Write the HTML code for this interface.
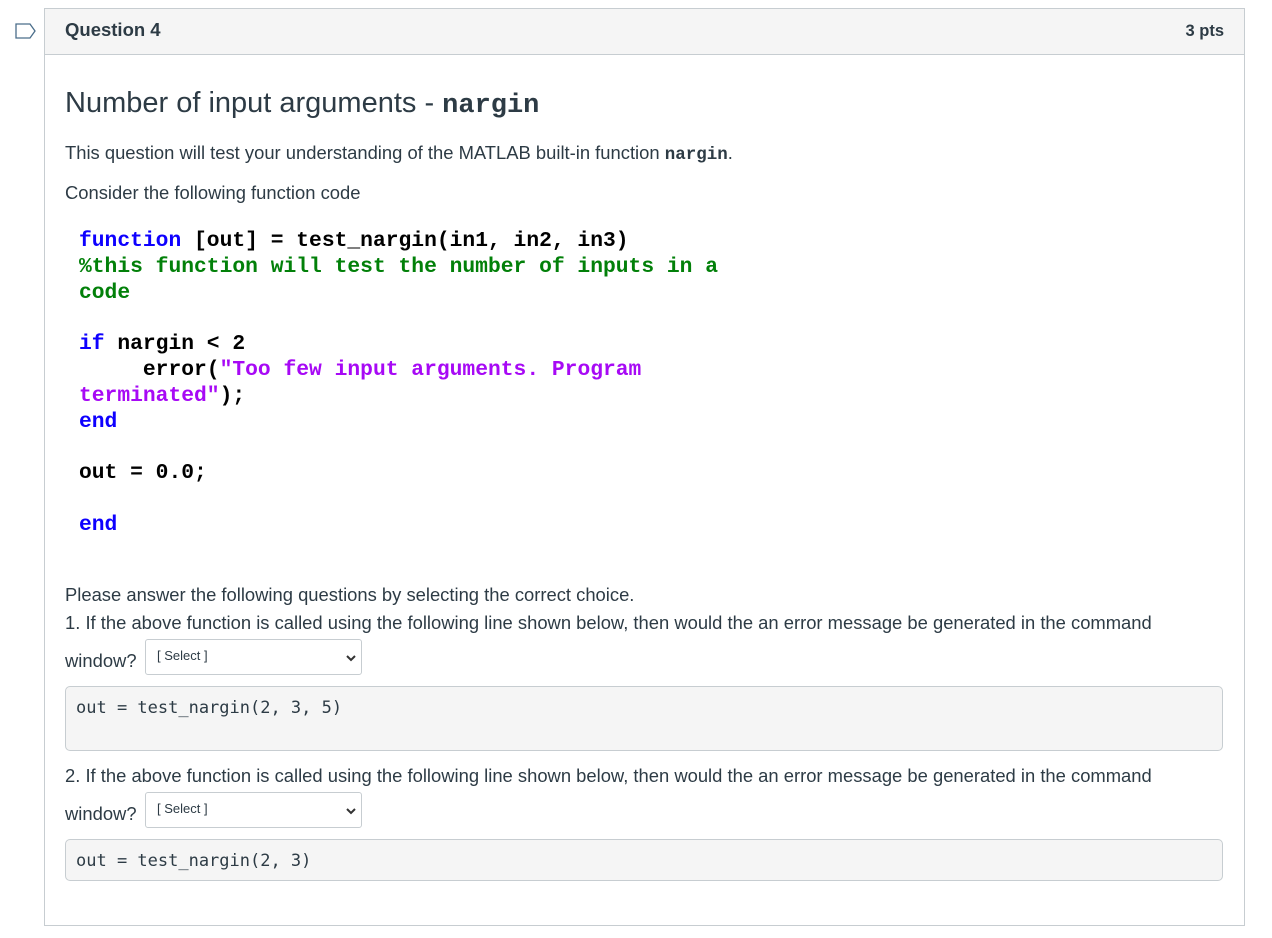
<!DOCTYPE html>
<html><head><style>
body{margin:0;background:#fff;width:1272px;height:938px;position:relative;font-family:"Liberation Sans",sans-serif;color:#2d3b45;}
.flag{position:absolute;left:15px;top:23px}
.box{position:absolute;left:44px;top:8px;width:1199px;height:916px;border:1px solid #c7cdd1;}
.hdr{height:45px;background:#f5f5f5;border-bottom:1px solid #c7cdd1;position:relative}
.hdr .t{position:absolute;left:20px;top:10px;font-weight:bold;font-size:18.5px;color:#2d3b45}
.hdr .p{position:absolute;right:20px;top:13px;font-weight:bold;font-size:16.5px;color:#2d3b45}
.a{position:absolute;font-size:18.4px;white-space:nowrap;color:#2d3b45}
.m{font-family:"Liberation Mono",monospace;font-weight:bold;color:#000}
.code{position:absolute;left:79px;font-family:"Liberation Mono",monospace;font-weight:bold;font-size:21.3px;line-height:25.8px;white-space:pre;color:#000;top:229px}
.b{color:#0e00ff}.g{color:#028009}.pu{color:#a709f5}
.sel{position:absolute;left:145px;width:217px;height:36px;border:1px solid #c7cdd1;border-radius:3px;background:#fff;box-sizing:border-box}
.sel span{position:absolute;left:11px;top:8px;font-size:13px;color:#2d3b45}
.sel svg{position:absolute;right:5px;top:15px}
.pre{position:absolute;left:65px;width:1158px;background:#f5f5f5;border:1px solid #c7cdd1;border-radius:5px;box-sizing:border-box;font-family:"DejaVu Sans Mono",monospace;font-size:17px;color:#2d3b45;padding:11px 10px}
</style></head><body>
<svg class="flag" width="22" height="16" viewBox="0 0 22 16"><path d="M1 1H15L20 8L15 15H1Z" fill="none" stroke="#4a6d8a" stroke-width="1.3"/></svg>
<div class="box"><div class="hdr"><div class="t">Question 4</div><div class="p">3 pts</div></div></div>
<div class="a" style="left:65px;top:87px;font-size:29px;color:#2d3b45">Number of input arguments - <span class="m" style="font-size:27px;color:#2d3b45">nargin</span></div>
<div class="a" style="left:65px;top:142px">This question will test your understanding of the MATLAB built-in function <span class="m" style="font-size:17.5px;color:#2d3b45">nargin</span>.</div>
<div class="a" style="left:65px;top:182px">Consider the following function code</div>
<div class="code"><span class="b">function</span> [out] = test_nargin(in1, in2, in3)
<span class="g">%this function will test the number of inputs in a
code</span>

<span class="b">if</span> nargin &lt; 2
     error(<span class="pu">"Too few input arguments. Program
terminated"</span>);
<span class="b">end</span>

out = 0.0;

<span class="b">end</span></div>
<div class="a" style="left:65px;top:584px">Please answer the following questions by selecting the correct choice.</div>
<div class="a" style="left:65px;top:612px">1. If the above function is called using the following line shown below, then would the an error message be generated in the command</div>
<div class="a" style="left:65px;top:650px">window?</div>
<div class="sel" style="top:639px"><span>[ Select ]</span><svg width="10" height="7" viewBox="0 0 10 7"><path d="M1 1L5 5L9 1" fill="none" stroke="#333" stroke-width="2"/></svg></div>
<div class="pre" style="top:686px;height:65px">out = test_nargin(2, 3, 5)</div>
<div class="a" style="left:65px;top:765px">2. If the above function is called using the following line shown below, then would the an error message be generated in the command</div>
<div class="a" style="left:65px;top:803px">window?</div>
<div class="sel" style="top:792px"><span>[ Select ]</span><svg width="10" height="7" viewBox="0 0 10 7"><path d="M1 1L5 5L9 1" fill="none" stroke="#333" stroke-width="2"/></svg></div>
<div class="pre" style="top:839px;height:42px">out = test_nargin(2, 3)</div>
</body></html>
